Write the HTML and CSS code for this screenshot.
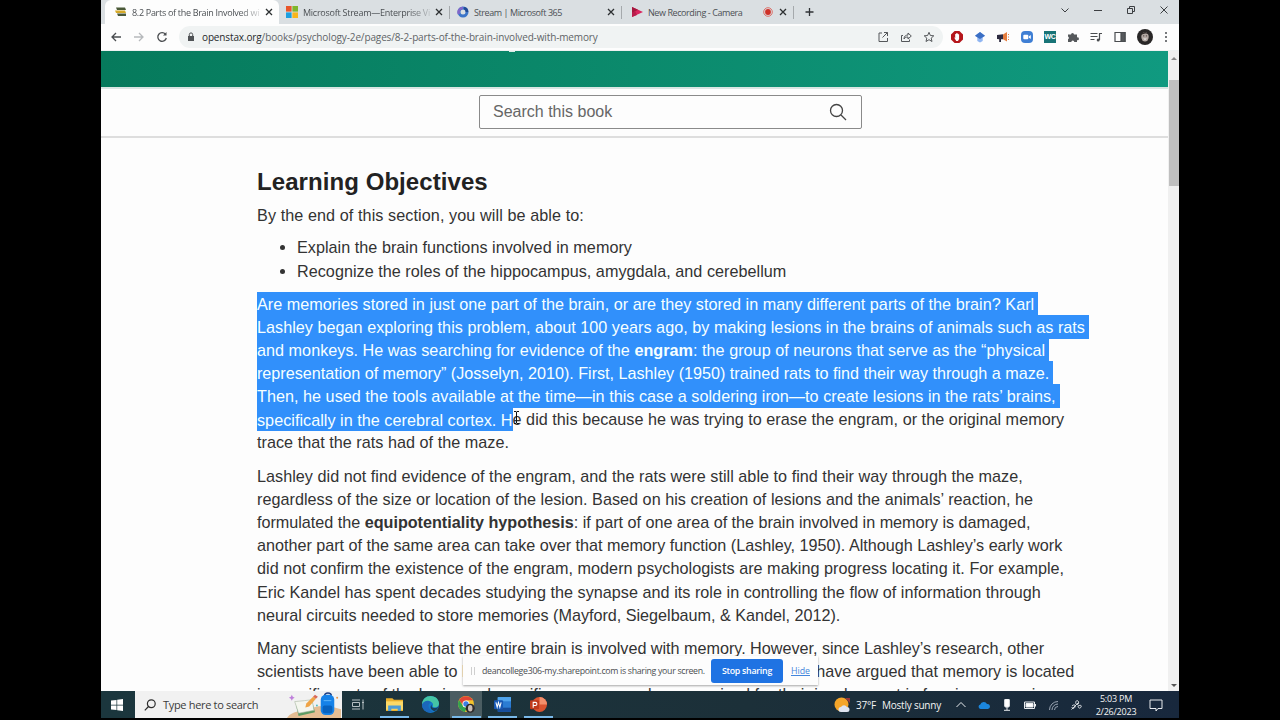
FILE: index.html
```html
<!DOCTYPE html>
<html lang="en">
	<head>
		<meta charset="UTF-8">
		<title>8.2 Parts of the Brain Involved with Memory</title>
		<link rel="stylesheet" href="styles.css">
	</head>
	<body>
		<div class="screen">
			<!-- tabs -->
			<div class="tabs">
				<div class="tab active">
					<svg class="favicon" viewBox="0 0 12 12"><path d="M1 1.500h9l1 2.500H2z" fill="#4b5a38"/><path d="M0 4.500h10l1 2.500H1z" fill="#d5a928"/><path d="M2 7.500h9V10H3z" fill="#49583a"/></svg>
					<span class="tab-title t1">8.2 Parts of the Brain Involved wi</span>
					<svg class="close" viewBox="0 0 8 8"><path d="M1 1l6 6M7 1L1 7"/></svg>
				</div>
				<div class="tab tab2">
					<svg class="favicon" viewBox="0 0 12 12"><path d="M0 0h5.6v5.6H0z" fill="#e8562a"/><path d="M6.4 0H12v5.6H6.4z" fill="#7fb62b"/><path d="M0 6.4h5.6V12H0z" fill="#1c9fe0"/><path d="M6.4 6.4H12V12H6.4z" fill="#f9b61b"/></svg>
					<span class="tab-title t2">Microsoft Stream—Enterprise Vi</span>
					<svg class="close" viewBox="0 0 8 8"><path d="M1 1l6 6M7 1L1 7"/></svg>
				</div>
				<div class="tab tab3">
					<svg class="favicon" viewBox="0 0 12 12"><circle cx="6" cy="6" r="4" fill="none" stroke="#3b75c9" stroke-width="3"/><path d="M2 8a4.2 4.2 0 0 1 4-6" fill="none" stroke="#8267c9" stroke-width="2.6"/><path d="M7 2a4 4 0 0 1 3 4" fill="none" stroke="#214b94" stroke-width="2.6"/></svg>
					<span class="tab-title t3">Stream | Microsoft 365</span>
					<svg class="close" viewBox="0 0 8 8"><path d="M1 1l6 6M7 1L1 7"/></svg>
				</div>
				<div class="tab tab4">
					<svg class="favicon" viewBox="0 0 12 12"><path d="M1 1l11 5-11 5z" fill="#d9255e"/><path d="M1 1l6 2.7L1 7z" fill="#a4183e"/><path d="M1 7l3-2 2 4-5 2z" fill="#b81d4b"/></svg>
					<span class="tab-title t4">New Recording - Camera</span>
					<svg class="rec" viewBox="0 0 10 10"><circle cx="5" cy="5" r="4.3" fill="none" stroke="#d9534a" stroke-width=".8"/><circle cx="5" cy="5" r="2.9" fill="#cf3128"/></svg>
					<svg class="close" viewBox="0 0 8 8"><path d="M1 1l6 6M7 1L1 7"/></svg>
				</div>
				<svg class="plus" viewBox="0 0 10 10"><path d="M5 1v8M1 5h8"/></svg>
				<div class="win-btns">
					<svg viewBox="0 0 10 10"><path d="M1.5 3.5L5 7l3.500-3.500"/></svg>
					<svg viewBox="0 0 10 10"><path d="M1 5.500h8"/></svg>
					<svg viewBox="0 0 10 10"><path d="M1.500 3.500h5v5h-5zM3.500 3.500v-2h5v5h-2"/></svg>
					<svg viewBox="0 0 10 10"><path d="M1.500 1.500l7 7M8.500 1.500l-7 7"/></svg>
				</div>
			</div>

			<!-- address bar -->
			<div class="toolbar">
				<svg class="nav" viewBox="0 0 12 12"><path d="M11 6H2M6 2L2 6l4 4"/></svg>
				<svg class="nav off" viewBox="0 0 12 12"><path d="M1 6h9M6 2l4 4-4 4"/></svg>
				<svg class="nav" viewBox="0 0 12 12"><path d="M9.500 3.300A4.300 4.300 0 1 0 10.300 7"/><path d="M10.500 1v3.500H7z" fill="#4a4d50" stroke="none"/></svg>
				<div class="url">
					<svg class="lock" viewBox="0 0 8 10"><path d="M1 4h6v5H1z" fill="#505356"/><path d="M2.300 4V2.600a1.700 1.700 0 0 1 3.400 0V4" fill="none" stroke="#505356"/></svg>
					<span class="address"><b>openstax.org</b>/books/psychology-2e/pages/8-2-parts-of-the-brain-involved-with-memory</span>
					<div class="url-icons">
						<svg viewBox="0 0 12 12"><path d="M5 2H2v8.500h8.500V7M7 1.500h3.500V5M10.500 1.500L5.500 6.500"/></svg>
						<svg viewBox="0 0 12 12"><path d="M3 4.500H1.500v6h8V8.500M4 8c0-3 2-4 4-4V2l3.300 3L8 8V6C6 6 5 6.500 4 8z"/></svg>
						<svg viewBox="0 0 12 12"><path d="M6 1.300l1.400 3.200 3.400.3-2.600 2.300.8 3.400-3-1.800-3 1.800.8-3.400L1.200 4.800l3.400-.3z"/></svg>
					</div>
				</div>
				<div class="exts">
					<svg viewBox="0 0 12 12"><path d="M3.600 0h4.800L12 3.600v4.800L8.400 12H3.600L0 8.400V3.600z" fill="#b5161b"/><path d="M3 6.200l1.200.8V3h.9V2.200h1V2.500h1v.8h1V8L7 10H5.200z" fill="#fff"/></svg>
					<svg viewBox="0 0 12 12"><path d="M6 1l5 3.800-2.300 1.800V10L6 11.500 3.300 10V6.600L1 4.800z" fill="#8fb5f2"/><path d="M6 1l5 3.800L6 8 1 4.800z" fill="#3b6fc4"/></svg>
					<svg viewBox="0 0 12 12"><path d="M0 4l6-.7v5H4V11H2.200V8.200L0 8z" fill="#2d2b40"/><path d="M6 3.400L10 1v9.500L6 8.200z" fill="#e67d3e"/><path d="M11 4l1-1M11 6h1.500M11 8l1 1" stroke="#e67d3e"/></svg>
					<svg viewBox="0 0 12 12"><rect width="12" height="12" rx="4" fill="#3f7fd4"/><rect x="2.300" y="3.800" width="5" height="4.500" rx="1" fill="#fff"/><path d="M7.800 5.500l2-1.400V8l-2-1.400z" fill="#fff"/></svg>
					<span class="wc">WC</span>
					<svg viewBox="0 0 12 12"><path d="M1 3.500h3a1.500 1.500 0 1 1 3 0h3v3a1.400 1.400 0 1 1 0 2.600v2H7.300a1.500 1.500 0 0 0-3 0H1V8.300a1.500 1.500 0 0 0 0-2.700z" fill="#55585b"/></svg>
					<svg viewBox="0 0 12 12" class="line-icon"><path d="M.5 2.500h7M.5 5.500h7M.5 8.500h4M9.500 9V2.500H12"/><circle cx="8.200" cy="9" r="1.500" fill="#4a4d50" stroke="none"/></svg>
					<svg viewBox="0 0 12 12" class="line-icon"><path d="M1 1.500h10v9H1z"/><path d="M7 1.500h4v9H7z" fill="#55585b"/></svg>
					<svg class="avatar" viewBox="0 0 16 16"><circle cx="8" cy="8" r="8" fill="#292727"/><ellipse cx="8" cy="7.800" rx="3.700" ry="4.800" fill="#b3a9a4"/><path d="M4 6c1-4 7-4 8 0-2-2-5-2-8 0z" fill="#302b2a"/><path d="M6 6.900h1.300M8.800 6.900h1.300" stroke="#4b4040"/><path d="M6.200 9.500h3.600L8 11z" fill="#eee"/></svg>
					<svg class="dots" viewBox="0 0 4 12"><circle cx="2" cy="2" r="1"/><circle cx="2" cy="6" r="1"/><circle cx="2" cy="10" r="1"/></svg>
				</div>
			</div>

			<!-- page -->
			<div class="viewport">
				<div class="page">
					<div class="banner"><i class="descender"></i></div>
					<div class="search-row">
						<div class="search">
							<span>Search this book</span>
							<svg viewBox="0 0 18 18"><circle cx="7.500" cy="7.500" r="6"/><path d="M12 12l5 5"/></svg>
						</div>
					</div>
					<div class="content">
						<h2>Learning Objectives</h2>
						<p class="intro">By the end of this section, you will be able to:</p>
						<ul>
							<li>Explain the brain functions involved in memory</li>
							<li>Recognize the roles of the hippocampus, amygdala, and cerebellum</li>
						</ul>
						<p>
							<span class="line"><mark>Are memories stored in just one part of the brain, or are they stored in many different parts of the brain? Karl</mark></span>
							<span class="line"><mark>Lashley began exploring this problem, about 100 years ago, by making lesions in the brains of animals such as rats</mark></span>
							<span class="line"><mark>and monkeys. He was searching for evidence of the <b>engram</b>: the group of neurons that serve as the “physical</mark></span>
							<span class="line tight"><mark>representation of memory” (Josselyn, 2010). First, Lashley (1950) trained rats to find their way through a maze.</mark></span>
							<span class="line"><mark>Then, he used the tools available at the time—in this case a soldering iron—to create lesions in the rats’ brains,</mark></span>
							<span class="line"><mark class="end">specifically in the cerebral cortex. H</mark><span class="caret-at">e<svg class="ibeam" viewBox="0 0 7 13"><path d="M1 .5h2l.5.5.5-.5h2M3.500 1v11M1 12.500h2l.5-.5.5.5h2"/></svg></span> did this because he was trying to erase the engram, or the original memory</span>
							<span class="line">trace that the rats had of the maze.</span>
						</p>
						<p>
							<span class="line">Lashley did not find evidence of the engram, and the rats were still able to find their way through the maze,</span>
							<span class="line">regardless of the size or location of the lesion. Based on his creation of lesions and the animals’ reaction, he</span>
							<span class="line tight">formulated the <b>equipotentiality hypothesis</b>: if part of one area of the brain involved in memory is damaged,</span>
							<span class="line tight">another part of the same area can take over that memory function (Lashley, 1950). Although Lashley’s early work</span>
							<span class="line">did not confirm the existence of the engram, modern psychologists are making progress locating it. For example,</span>
							<span class="line">Eric Kandel has spent decades studying the synapse and its role in controlling the flow of information through</span>
							<span class="line tight">neural circuits needed to store memories (Mayford, Siegelbaum, &amp; Kandel, 2012).</span>
						</p>
						<p>
							<span class="line tight">Many scientists believe that the entire brain is involved with memory. However, since Lashley’s research, other</span>
							<span class="line">scientists have been able to look more closely at the brain and memory. They have argued that memory is located</span>
							<span class="line">in specific parts of the brain, and specific neurons can be recognized for their involvement in forming memories.</span>
						</p>
					</div>
				</div>
				<div class="scrollbar">
					<i class="arrow up"></i>
					<div class="thumb"></div>
					<i class="arrow down"></i>
				</div>
			</div>

			<!-- taskbar -->
			<div class="taskbar">
				<div class="start"><svg viewBox="0 0 12 12"><path d="M0 1.600L5.500.9v4.800H0zM6.200.8L12 0v5.700H6.200zM0 6.400h5.500v4.700L0 10.400zM6.200 6.400H12V12l-5.800-.8z" fill="#fff"/></svg></div>
				<div class="task-search">
					<svg class="glass" viewBox="0 0 12 12"><circle cx="7.300" cy="4.700" r="3.900"/><path d="M4.500 7.500L.8 11.300"/></svg>
					<span>Type here to search</span>
					<svg class="doodle" viewBox="0 0 56 28"><path d="M0 28c4-6 12-8 20-7 9-7 22-7 36-2v9z" fill="#e5bd93"/><path d="M9 13l17-3 3 12-17 4z" fill="#5c9a62"/><path d="M8 11l10-1 8-1 2 11-16 3z" fill="#f4f6ee" stroke="#a9b7a1" stroke-width=".6"/><path d="M20 13l7-7 3 2-7 8-4 1z" fill="#efa545"/><path d="M27 6l2-2 3 2-2 2z" fill="#d86a58"/><path d="M5 4l1 2 2 1-2 1-1 2-1-2-2-1 2-1z" fill="#bf7fdb"/><circle cx="31" cy="15" r="1" fill="#4ebdc2"/><circle cx="52" cy="7" r="1" fill="#e79344"/><path d="M39 5c0-4 7-4 7 0" fill="none" stroke="#1f3f83" stroke-width="1.500"/><rect x="35" y="4" width="14" height="21" rx="5" fill="#1682e8"/><rect x="37" y="15" width="10" height="8" rx="2" fill="#0862bf"/><path d="M38 10h8" stroke="#63b7fa"/></svg>
				</div>
				<div class="apps">
					<div class="app"><svg viewBox="0 0 16 16" class="taskview"><path d="M2 3.500h8M2 12.500h8M2.500 6h7v4h-7zM13 3v10"/><path d="M12 6h2"/></svg></div>
					<div class="app open"><svg viewBox="0 0 16 16"><path d="M0 2h6l1.500 1.500H16V14H0z" fill="#e9ae2b"/><path d="M0 5h16v8H0z" fill="#fbd867"/><path d="M2 9h12v5h-3v-2H5v2H2z" fill="#4c9bd6"/></svg></div>
					<div class="app"><svg viewBox="0 0 16 16"><circle cx="8" cy="8" r="8" fill="#1479ca"/><path d="M0 8C0 3 4 0 8 0c5 0 8 3.500 8 7 0 3-3 4-5 3.600-1.500-.4-.6-1.200-.6-2.600C10.400 5 4 3 0 8z" fill="#45c5a5"/><path d="M0 8c2-4 6-4.500 9-2-3 0-5 5 1 8.800C5 17 0 13 0 8z" fill="#1b67bb"/><path d="M9.500 8c-1 1-.5 3 1.500 3.300 1.600.3 3.400-.3 4.500-1.300-.7 2-2 3.500-4 4.300C8 13 7 9.500 9.500 8z" fill="#1b3e57"/></svg></div>
					<div class="app open current"><svg viewBox="0 0 16 16"><circle cx="7.500" cy="7.500" r="7.500" fill="#f5c52c"/><path d="M1 3.800A7.500 7.500 0 0 1 14 4H7.500L5 9z" fill="#e04637"/><path d="M1 3.800L5.200 10l3 1-1.700 4C1 14-1.500 8 1 3.800z" fill="#31a350"/><circle cx="7.500" cy="7.500" r="3.300" fill="#fff"/><circle cx="7.500" cy="7.500" r="2.500" fill="#3c7fe4"/><circle cx="11.500" cy="11.500" r="4.300" fill="#302d2d"/><ellipse cx="11.500" cy="11.500" rx="2.100" ry="3" fill="#cbbdb6"/></svg></div>
					<div class="app open"><svg viewBox="0 0 16 16"><rect x="3.500" y="1" width="12.500" height="14" rx="1" fill="#2b7cd3"/><path d="M3.500 1H16v4H3.500z" fill="#50a4ec"/><path d="M3.500 11H16v4H3.500z" fill="#174d9b"/><rect y="4" width="8.500" height="8.500" rx="1" fill="#1858b4"/><path d="M1.800 6l1.200 4.500L4.200 6l1.300 4.500L6.700 6" fill="none" stroke="#fff"/></svg></div>
					<div class="app open"><svg viewBox="0 0 16 16"><circle cx="9" cy="8" r="7" fill="#d9532f"/><path d="M9 1a7 7 0 0 1 7 7H9z" fill="#f38f6b"/><rect y="4" width="8.500" height="8.500" rx="1" fill="#bf3b1c"/><path d="M3 11V6h2a1.500 1.500 0 0 1 0 3H3" fill="none" stroke="#fff"/></svg></div>
				</div>
				<div class="tray">
					<svg class="weather" viewBox="0 0 16 16"><circle cx="7.500" cy="7.500" r="7" fill="#f5a529"/><path d="M11 1h5v5z" fill="#993639"/><path d="M7 15a2.500 2.500 0 0 1 0-5 3.500 3.500 0 0 1 6 0 2.500 2.500 0 0 1 0 5z" fill="#dfe4ef"/></svg>
					<span class="temp">37°F</span><span class="sunny">Mostly sunny</span>
					<svg class="chev" viewBox="0 0 12 12"><path d="M1.500 8L6 3.500 10.500 8"/></svg>
					<svg class="cloud" viewBox="0 0 12 12"><path d="M2.500 10a2.300 2.300 0 0 1-.2-4.500A3.600 3.600 0 0 1 9 5a2.500 2.500 0 0 1 .8 5z" fill="#1b86dd"/></svg>
					<svg class="mic" viewBox="0 0 12 12"><rect x="3.700" y="0" width="4.600" height="8" rx="1" fill="#fff"/><path d="M6 8v3M3 11.300h6"/></svg>
					<svg class="battery" viewBox="0 0 12 12"><path d="M.5 3h10v6.500H.5zM11.500 5v2.500"/><path d="M2 4.500h7V8H2z" fill="#fff"/></svg>
					<svg class="wifi" viewBox="0 0 12 12"><path d="M2.500 11A8.500 8.500 0 0 1 11 2.500M5 11a6 6 0 0 1 6-6M7.500 11A3.500 3.500 0 0 1 11 7.500"/></svg>
					<svg class="pen" viewBox="0 0 12 12"><path d="M1.500 10.500L8 4M2 7c2-2 4-1 3 1s-3 2-3 0M6 5c-1-3 1-4 2-3s1 3-1 4M8 7c2-1 4-1 3 1s-3 1-3-1"/></svg>
					<div class="clock"><span>5:03 PM</span><span>2/26/2023</span></div>
					<svg class="note" viewBox="0 0 14 14"><path d="M1 2h12v8.500H9l-2 2.500v-2.500H1z"/></svg>
				</div>
			</div>

			<!-- screen sharing notice, floats over the page -->
			<div class="share">
				<i class="grip"></i>
				<span class="share-text">deancollege306-my.sharepoint.com is sharing your screen.</span>
				<button class="stop">Stop sharing</button>
				<a class="hide" href="#">Hide</a>
			</div>
		</div>
	</body>
</html>
```
FILE: styles.css
```css
*{
	box-sizing: border-box;
}
body{
	margin: 0;
	background: #000;
	font-family: "Open Sans", "Noto Sans", sans-serif;
	overflow: hidden;
}
svg{
	display: block;
	flex: none;
	fill: none;
}
.screen{
	position: relative;
	display: flex;
	flex-direction: column;
	width: 1078px;
	height: 718px;
	margin-left: 101px;
	background: #fdfdfd;
	overflow: hidden;
}

/* tabs */
.tabs{
	flex: none;
	display: flex;
	height: 24px;
	background: #dadfe2;
	color: #4c5054;
	font-size: 9px;
	letter-spacing: -.42px;
}
.tab{
	display: flex;
	align-items: center;
	width: 172px;
	padding: 0 6px 0 10px;
	white-space: nowrap;
}
.tab.active{
	width: 174px;
	margin-left: 4px;
	background: #fdfdfd;
	border-radius: 6px 6px 0 0;
	padding-left: 10px;
}
.tab2{
	width: 170px;
	padding-left: 7px;
}
.tab3, .tab4, .plus{
	background-image: linear-gradient(#a5a9ac, #a5a9ac);
	background-size: 1px 13px;
	background-position: 0 6px;
	background-repeat: no-repeat;
}
.tab3{
	padding-left: 8px;
}
.favicon{
	width: 12px;
	height: 12px;
	margin-right: 5px;
}
.tab-title{
	flex: 1;
}
.t1{
	letter-spacing: -.3px;
}
.t2{
	letter-spacing: -.25px;
}
.t1, .t2{
	-webkit-mask-image: linear-gradient(to right, #000 80%, transparent);
	mask-image: linear-gradient(to right, #000 80%, transparent);
}
.close{
	width: 8px;
	height: 8px;
	stroke: #2c2f31;
	stroke-width: 1.3;
}
.rec{
	width: 10px;
	height: 10px;
	margin-right: 6px;
}
.plus{
	width: 22px;
	height: 24px;
	padding: 7px 0 7px 11px;
	overflow: visible;
	stroke: #303336;
	stroke-width: 1.3;
}
.win-btns{
	display: flex;
	gap: 23px;
	margin: 5px 10px 0 auto;
}
.win-btns svg{
	width: 10px;
	height: 10px;
	stroke: #3c3f42;
}

/* address bar */
.toolbar{
	flex: none;
	display: flex;
	align-items: center;
	height: 27px;
	padding: 0 11px 0 9px;
	background: #fdfdfd;
	border-bottom: 1px solid #eef1f1;
}
.nav{
	width: 12px;
	height: 12px;
	margin-right: 11px;
	stroke: #4a4d50;
	stroke-width: 1.3;
}
.off{
	stroke: #b6b9bc;
}
.url{
	display: flex;
	align-items: center;
	width: 764px;
	height: 22px;
	padding: 0 8px 0 8px;
	border-radius: 11px;
	background: #f0f3f3;
}
.lock{
	width: 8px;
	height: 10px;
	margin-right: 7px;
}
.address{
	color: #606467;
	font-size: 10px;
	letter-spacing: -.13px;
	white-space: nowrap;
}
.address b{
	font-weight: normal;
	color: #26292b;
}
.url-icons{
	display: flex;
	gap: 11px;
	margin-left: auto;
}
.url-icons svg{
	width: 12px;
	height: 12px;
	stroke: #54575a;
}
.exts{
	flex: 1;
	display: flex;
	align-items: center;
	justify-content: space-between;
	margin-left: 8px;
}
.exts svg{
	width: 12px;
	height: 12px;
}
.exts .line-icon{
	stroke: #4a4d50;
	stroke-width: 1.2;
}
.exts .avatar{
	width: 16px;
	height: 16px;
}
.exts .dots{
	width: 4px;
	fill: #4a4d50;
}
.wc{
	width: 12px;
	height: 12px;
	background: #187477;
	color: #fff;
	font: bold 7px/12px "Liberation Sans", sans-serif;
	text-align: center;
	letter-spacing: -.5px;
}

/* page */
.viewport{
	flex: 1;
	min-height: 0;
	display: flex;
}
.page{
	width: 1067px;
	overflow: hidden;
	font-family: "Liberation Sans", Arial, sans-serif;
	color: #333;
}
.banner{
	height: 36px;
	background: linear-gradient(to right, #067a5c, #0b8a6c 50%, #109a80);
}
.descender{
	display: block;
	width: 6px;
	height: 1px;
	margin-left: 408px;
	background: #d8eee7;
}
.search-row{
	height: 51px;
	padding: 6px 0 0 378px;
	border-top: 2px solid #d9e6e3;
	border-bottom: 2px solid #dedede;
}
.search{
	display: flex;
	align-items: center;
	justify-content: space-between;
	width: 383px;
	height: 34px;
	padding: 0 14px 0 13px;
	border: 1px solid #8a8a8a;
	border-radius: 2px;
	color: #666;
	font-size: 16px;
}
.search svg{
	width: 18px;
	height: 18px;
	stroke: #444;
	stroke-width: 1.3;
}
.content{
	padding: 29px 0 0 156px;
	font-size: 16.2px;
	line-height: 23.15px;
	letter-spacing: .025px;
}
h2{
	margin: 0;
	font-size: 24px;
	line-height: 30px;
	letter-spacing: .07px;
	color: #222;
}
p{
	margin: 0 0 10.3px;
}
.intro{
	margin: 7px 0 9px;
	letter-spacing: .08px;
}
ul{
	margin: 0 0 8.6px;
	padding-left: 40px;
	line-height: 23.8px;
}
.line{
	display: block;
	white-space: nowrap;
}
.tight{
	letter-spacing: -.02px;
}
mark{
	padding: 2.5px 4px 3px 0;
	background: #3190fb;
	color: #f6ffff;
}
.end{
	padding-right: 0;
}
.caret-at{
	position: relative;
}
.ibeam{
	position: absolute;
	left: 0;
	top: 1px;
	width: 7px;
	height: 13px;
	stroke: #111;
}
.scrollbar{
	display: flex;
	flex-direction: column;
	align-items: center;
	width: 11px;
	background: #f0f0f0;
}
.thumb{
	width: 10px;
	height: 106px;
	margin-top: 20px;
	background: #bfbfbf;
}
.arrow{
	border: 3px solid transparent;
}
.up{
	margin-top: 6px;
	border-top: 0;
	border-bottom-color: #888;
}
.down{
	margin: auto 0 4px;
	border-bottom: 0;
	border-top-color: #555;
}

/* taskbar */
.taskbar{
	flex: none;
	display: flex;
	height: 27px;
	background: linear-gradient(to right, #1b363d, #1c3039 60%, #18283d);
	color: #f4f4f4;
}
.start{
	width: 34px;
	padding: 8px 0 0 10px;
}
.start svg{
	width: 12px;
	height: 12px;
}
.task-search{
	display: flex;
	align-items: center;
	width: 207px;
	padding-left: 9px;
	background: #f1f1f1;
	color: #3b3b3b;
	font-size: 11px;
	letter-spacing: -.32px;
	white-space: nowrap;
}
.glass{
	width: 12px;
	height: 12px;
	margin-right: 7px;
	stroke: #2d2d2d;
	stroke-width: 1.2;
}
.doodle{
	width: 56px;
	height: 27px;
	margin-left: auto;
}
.apps{
	display: flex;
}
.app{
	display: flex;
	justify-content: center;
	align-items: center;
	width: 32px;
	margin-right: 4px;
}
.app svg{
	width: 17px;
	height: 17px;
}
.app .taskview{
	width: 16px;
	stroke: #b5bfc2;
}
.open{
	background: linear-gradient(#79b9ea, #79b9ea) center bottom / 29px 2px no-repeat;
}
.current{
	background-color: #4b5d62;
}
.tray{
	display: flex;
	align-items: center;
	margin-left: auto;
	padding-right: 16px;
	font-size: 10px;
	letter-spacing: -.22px;
	white-space: nowrap;
}
.tray svg{
	width: 12px;
	height: 12px;
	margin-right: 11px;
	stroke: #e8ebee;
}
.tray .weather{
	width: 16px;
	height: 16px;
	margin-right: 6px;
	stroke: none;
}
.temp{
	margin-right: 6px;
}
.sunny{
	margin-right: 14px;
}
.tray .cloud{
	stroke: none;
}
.tray .wifi{
	stroke: #9aa5b3;
}
.tray .pen{
	stroke-width: .9;
}
.clock{
	display: flex;
	flex-direction: column;
	align-items: center;
	width: 42px;
	margin: 0 12px 0 2px;
	font-size: 9px;
	line-height: 13px;
}
.tray .note{
	width: 14px;
	height: 14px;
	margin-right: 0;
}

/* sharing notice */
.share{
	position: absolute;
	left: 362px;
	top: 656px;
	display: flex;
	align-items: center;
	width: 355px;
	height: 29px;
	padding: 0 8px;
	background: #fdfdfd;
	box-shadow: 0 1px 2px rgba(0,0,0,0.35);
	font-size: 8.8px;
	letter-spacing: -.32px;
	white-space: nowrap;
	color: #4b4e51;
}
.grip{
	width: 4px;
	height: 8px;
	margin-right: 7px;
	border: solid #cfcfcf;
	border-width: 0 1px;
}
.stop{
	flex: none;
	width: 72px;
	height: 24px;
	margin: 0 8px 0 auto;
	padding: 0;
	border: 0;
	border-radius: 3px;
	background: #1f73e3;
	color: #fff;
	font: 600 8.8px "Open Sans", sans-serif;
	letter-spacing: -.25px;
}
.hide{
	letter-spacing: 0;
	color: #4385dc;
}
```
